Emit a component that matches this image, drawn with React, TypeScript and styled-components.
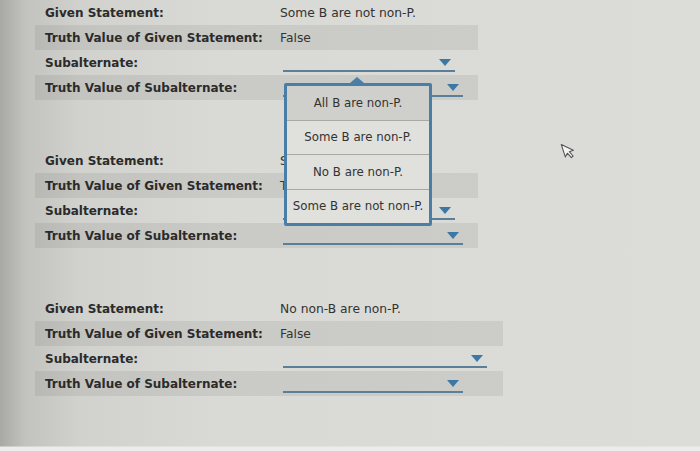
import styled, { createGlobalStyle } from "styled-components";

const GlobalStyle = createGlobalStyle`
	html, body {
		margin: 0;
		padding: 0;
	}
	body {
		width: 700px;
		height: 451px;
		overflow: hidden;
		font-family: "DejaVu Sans", Verdana, sans-serif;
		background:
			linear-gradient(to bottom, rgba(255, 255, 255, 0) 0, rgba(255, 255, 255, 0) 446px, #ececea 447px),
			linear-gradient(to right, #a8a8a4 0, #c2c2be 25px, #d1d1cd 80px, #d9d9d5 220px, #dcdcd8 700px);
	}
`;

interface RowData {
	label: string;
	value?: string;
	dropdown?: number;
}

interface BlockData {
	width: number;
	rows: RowData[];
}

const blocks: BlockData[] = [
	{
		width: 443,
		rows: [
			{ label: "Given Statement:", value: "Some B are not non-P." },
			{ label: "Truth Value of Given Statement:", value: "False" },
			{ label: "Subalternate:", dropdown: 172 },
			{ label: "Truth Value of Subalternate:", dropdown: 180 },
		],
	},
	{
		width: 443,
		rows: [
			{ label: "Given Statement:", value: "Some B are non-P." },
			{ label: "Truth Value of Given Statement:", value: "True" },
			{ label: "Subalternate:", dropdown: 172 },
			{ label: "Truth Value of Subalternate:", dropdown: 180 },
		],
	},
	{
		width: 468,
		rows: [
			{ label: "Given Statement:", value: "No non-B are non-P." },
			{ label: "Truth Value of Given Statement:", value: "False" },
			{ label: "Subalternate:", dropdown: 204 },
			{ label: "Truth Value of Subalternate:", dropdown: 180 },
		],
	},
];

const options = ["All B are non-P.", "Some B are non-P.", "No B are non-P.", "Some B are not non-P."];

const App = () => {
	return (
		<>
			<GlobalStyle />
			<Page>
				{blocks.map((block, i) => (
					<Block key={i} $width={block.width}>
						{block.rows.map((row, j) => (
							<Row key={j} $shaded={j % 2 === 1}>
								<Label>{row.label}</Label>
								{row.dropdown ? (
									<Select $width={row.dropdown}>
										<Caret />
										<Underline />
									</Select>
								) : (
									<Value>{row.value}</Value>
								)}
							</Row>
						))}
					</Block>
				))}

				{/* open list of the first Subalternate dropdown */}
				<Menu>
					<MenuPointer />
					{options.map((opt, i) => (
						<MenuItem key={opt} $active={i === 0}>
							{opt}
						</MenuItem>
					))}
				</Menu>

				<Cursor width="14" height="19" viewBox="0 0 14 19">
					<path
						d="M1.5 1.5 L1.5 14.5 L4.6 11.6 L7 17 L9.2 16 L6.9 10.7 L11.2 10.7 Z"
						fill="#f4f4f2"
						stroke="#555"
						strokeWidth="1.1"
						strokeLinejoin="round"
					/>
				</Cursor>
			</Page>
		</>
	);
};

export default App;

const Page = styled.div`
	position: relative;
	width: 700px;
	height: 451px;
	padding-left: 35px;
	box-sizing: border-box;
	display: flex;
	flex-direction: column;
	gap: 48px;
`;

const Block = styled.div<{ $width: number }>`
	width: ${(p) => p.$width}px;
	display: flex;
	flex-direction: column;
`;

const Row = styled.div<{ $shaded: boolean }>`
	height: 25px;
	display: grid;
	grid-template-columns: 246px 1fr;
	align-items: center;
	background: ${(p) => (p.$shaded ? "rgba(60, 60, 50, 0.09)" : "transparent")};
`;

const Label = styled.div`
	padding-left: 10px;
	font-size: 12px;
	font-weight: bold;
	color: #2b2b2b;
	white-space: nowrap;
`;

const Value = styled.div`
	margin-left: -1px;
	font-size: 12.3px;
	color: #333;
	white-space: nowrap;
`;

const Select = styled.div<{ $width: number }>`
	align-self: stretch;
	width: ${(p) => p.$width}px;
	margin-left: 2px;
	display: flex;
	flex-direction: column;
	justify-content: flex-end;
	align-items: flex-end;
	padding-bottom: 3px;
	box-sizing: border-box;
`;

const Caret = styled.div`
	width: 0;
	height: 0;
	margin-right: 4px;
	margin-bottom: 4px;
	border-left: 6px solid transparent;
	border-right: 6px solid transparent;
	border-top: 7px solid #3b78a6;
`;

const Underline = styled.div`
	width: 100%;
	height: 2px;
	background: #5b7f98;
`;

const Menu = styled.div`
	position: absolute;
	left: 284px;
	top: 83px;
	width: 148px;
	box-sizing: border-box;
	border: 3px solid #4a7ea6;
	border-radius: 2px;
	background: #e0e0dc;
	display: flex;
	flex-direction: column;
`;

const MenuPointer = styled.div`
	position: absolute;
	left: 63px;
	top: -9px;
	width: 0;
	height: 0;
	border-left: 7px solid transparent;
	border-right: 7px solid transparent;
	border-bottom: 6px solid #4a7ea6;
`;

const MenuItem = styled.div<{ $active: boolean }>`
	height: 33.5px;
	display: flex;
	align-items: center;
	justify-content: center;
	font-size: 11.8px;
	color: #333;
	white-space: nowrap;
	background: ${(p) => (p.$active ? "#cfcfcb" : "transparent")};
	& + & {
		border-top: 1px solid #a8a8a6;
	}
`;

const Cursor = styled.svg`
	position: absolute;
	left: 562px;
	top: 141px;
	transform: rotate(-18deg);
`;
